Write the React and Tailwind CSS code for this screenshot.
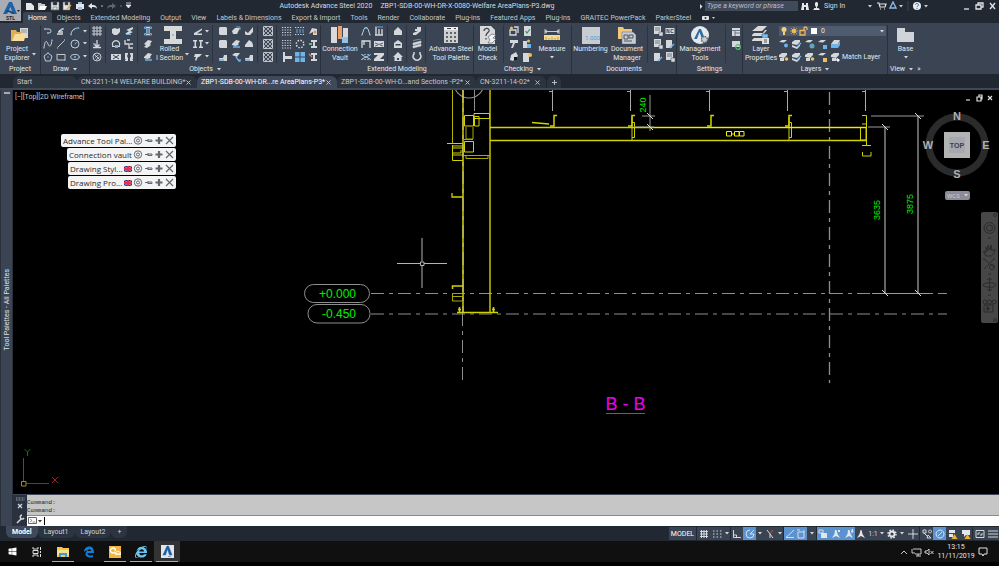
import { FaWindows, FaInternetExplorer } from "react-icons/fa";

/* ---------- small ribbon glyphs, drawn on a 10x10 grid ---------- */

const W = "#d4d8dc";
const B = "#6fb4e8";
const Y = "#f0c060";

const stroke = { fill: "none", stroke: W, strokeWidth: 0.9 };
const blue = { fill: "none", stroke: B, strokeWidth: 0.9 };

const glyphs = {
  polyline: <><path d="M1 3h5a2 2 0 0 1 0 4H4" {...stroke} /><path d="M1 3h2M4 7h2" {...blue} /></>,
  poly3d: <><path d="M1 8h6M2 6h5M3 6c0-3 4-1 4-4" {...stroke} strokeWidth="1.4" /><path d="M5 3h3" {...blue} /></>,
  arc: <><path d="M1 9C1 5 4 2 8 2" {...stroke} /><path d="M.5 8.5H2M4 3.5h1M8 2h1.2" {...blue} strokeWidth="1.3" /></>,
  spline: <><path d="M1 9C2 0 4 2 5 5s3 4 4-4" {...stroke} /><path d="M.5 9h1M8.5 1h1" {...blue} strokeWidth="1.3" /></>,
  line: <><path d="M1.5 8.5l7-7" {...stroke} /><path d="M1 9h1M8 1h1" {...blue} strokeWidth="1.3" /></>,
  circle: <><circle cx="5" cy="5" r="4" {...stroke} /><path d="M5 5l3-3M4.5 5h1" {...blue} /></>,
  polygon: <><path d="M5 1l4 3-1.5 5h-5L1 4z" {...stroke} /><path d="M4.5 5h1M4.5 1h1" {...blue} strokeWidth="1.3" /></>,
  rect: <><path d="M1 2.5h8V8H1z" {...stroke} /><path d="M.5 2.5H2M8 8h1.5" {...blue} strokeWidth="1.3" /></>,
  ellipse: <><ellipse cx="5" cy="5" rx="4.3" ry="2.5" {...stroke} /><path d="M4 5h2M8.5 5h1" {...blue} strokeWidth="1.3" /></>,
  grid: <path d="M2 0v10M5 0v10M8 0v10M0 2h10M0 5h10M0 8h10" {...stroke} />,
  axis: <><path d="M1 8.5h8M5 1v7M2.5 5.5L5 8l2.5-2.5" {...stroke} strokeWidth="1.3" /><path d="M1 5h3" {...stroke} /></>,
  noEntry: <><circle cx="5" cy="5" r="4" {...stroke} /><path d="M2 2l6 6M3 5.5L6.5 3M4 8l3.5-3" {...stroke} /></>,
  blobs: <path d="M1 3l3-1 2 1 3-1v4L6 9H3L1 7z" fill={W} />,
  wing: <><path d="M1 8l4-3-3-1 7-3v2L6 5l3 1-4 2z" fill={W} /><path d="M2 8.5h5" {...blue} /></>,
  omega: <><path d="M2 7a3.5 3.5 0 1 1 6 0M1 7.5h3M6 7.5h3" {...stroke} strokeWidth="1.2" /><path d="M4 6h3v3H4z" fill={B} /></>,
  stairs: <path d="M1 1v4h4v4h4M3 1h3M6 5h3" {...stroke} strokeWidth="1.3" />,
  plateH: <><path d="M0 2h10v6H0z" fill={W} /><path d="M2 3l3 2 3-2M2 7l3-2 3 2" fill="none" stroke="#3b4453" /></>,
  plates4: <path d="M1 1h3v1l-1 2 1 2v3H1V8l1-1H1V3zM9 1H6v1l1 2-1 2v3h3V8L8 7h1V3z" fill={W} />,
  ibeam: <><path d="M1.5 1h7v1.5h-2v5h2V9h-7V7.5h2v-5h-2z" {...blue} /><path d="M3 1.5h4M5 2v6M3 8.5h4" {...stroke} /></>,
  sheet: <path d="M1 5l4-4 4 1-2 3 1 1-4 3-3-1 2-2z" fill={W} />,
  sheetBlue: <><path d="M1 5l4-4 4 1-2 3 1 1-4 1-3-1z" fill={W} /><path d="M2 8h7" stroke={B} strokeWidth="1.5" /></>,
  angle: <path d="M1 9h8V7.5H4L9 4V2.5L1 7z" fill={W} />,
  twinI: <path d="M0 1h4v1.5H3v5h1V9H0V7.5h1.5v-5H0zM10 1H6v1.5h1v5H6V9h4V7.5H8.5v-5H10z" fill={W} />,
  bent: <path d="M2 2h7L6 5H5L3 9 2 8l1-3H1z" fill={W} />,
  plate: <path d="M2 1h6l1 1v7H2L1 8V2z" fill={W} />,
  plateCut: <><path d="M1 5l3-3h5L6 8H2z" fill={W} /><path d="M5 1h4v3" {...blue} /></>,
  plateFold: <path d="M1 5l3 2 5-6v5L6 9H2L1 8z" fill={W} />,
  dome: <path d="M1 8V6l4-5 3 2 1 3v2z" fill={W} />,
  slab: <><path d="M1 6h4l1-3h3v6H2z" fill={W} /><path d="M1 8h5" stroke={B} strokeWidth="1.6" /></>,
  slab2: <><path d="M1 3l3-2h5L6 5z" fill={W} /><path d="M5 5l3 4h1V7" stroke={B} fill="none" strokeWidth="1.3" /></>,
  checker: <path d="M0 2l2-2 8 8-2 2zM8 0l2 2-8 8-2-2zM4 0h2l4 4v2l-4 4H4L0 6V4zM.5.5h9v9h-9z" fill="none" stroke={W} strokeWidth=".7" />,
  dots: <path d="M0 1.5h10M0 4h10M0 6.5h10M0 9h10" fill="none" stroke={W} strokeWidth="1.2" strokeDasharray="1.3 1.3" />,
  dotsBlue: <><path d="M0 1.5h10M0 8.5h10" fill="none" stroke={W} strokeWidth="1.2" strokeDasharray="1.3 1.3" /><path d="M1 4h8M1 6h8" {...blue} strokeDasharray="2 1" /></>,
  ring: <circle cx="5" cy="5" r="3.7" fill="none" stroke={W} strokeWidth="1.5" strokeDasharray="1.5 1.4" />,
  tee: <path d="M1 0h2v4h7v3H3v3H1z" fill={W} />,
  tiles: <path d="M0 0h4.5v4.5H0zM5.5 0H10v4.5H5.5zM0 5.5h4.5V10H0zM5.5 5.5H10V10H5.5z" fill={B} />,
  weld: <><path d="M1 8l3-6 5 1v6H5V6z" fill={W} /><circle cx="7" cy="6" r="1.5" fill="#e09050" /></>,
  boltGreen: <><path d="M3 1h6v2H7v4h2v2H3V7h2V3H3z" fill={W} /><path d="M1 5h3" stroke="#50c878" strokeWidth="2" /></>,
  boltRed: <><path d="M3 1h6v2H7v4h2v2H3V7h2V3H3z" fill={W} /><path d="M1 2l3 3" stroke="#d08080" strokeWidth="1.2" /></>,
  frame: <><path d="M1 9l2-6 2-2 2 2 2 6" {...stroke} /><path d="M.5 9h1M3.5 2h3M8.5 9h1" {...blue} strokeWidth="1.3" /></>,
  portal: <path d="M1 9V2h8v7M3 2v4" {...stroke} strokeWidth="1.3" />,
  bracing: <><path d="M1 3l8 4M1 7l8-4" {...stroke} /><path d="M0 2.5h10M0 7.5h10" {...blue} strokeDasharray="2 1" /></>,
  columns: <><path d="M2 1v8M5 3v6M8 3v6M1 9h8" {...stroke} strokeWidth="1.4" /><path d="M1 1h8" {...blue} /></>,
  envelope: <><path d="M0 2h10v6H0z" fill={W} /><path d="M1 4l4 1.5L9 4M1 7l3-1M9 7L6 6" fill="none" stroke="#3b4453" strokeWidth=".8" /></>,
  zed: <path d="M0 1h10v2L6 7h4v2H0V7l4-4H0z" fill={W} />,
  house: <path d="M5 1l4 4v4H1V5z" fill={W} />,
  houseDoor: <path d="M5 0l5 5H8.5v4h-7V5H0zM4 6v2h2V6z" fill={W} fillRule="evenodd" />,
  houseBar: <path d="M5 1l4 3v5H1V4zM2.5 5v1.5h5V5z" fill={W} fillRule="evenodd" />,
  stair: <path d="M1 9h3l5-4V1H5v2H3v2h3L1 7z" fill={W} />,
  rail: <path d="M1 4l8-2v2L1 6zM1 7l8-2v2L1 9zM1 1.5L9 0" fill={W} stroke={W} strokeWidth=".5" />,
  cage: <path d="M2 0v2a3.800 3.800 0 1 0 6 0V0" fill="none" stroke={W} strokeWidth="1.5" />,
  clash: <><path d="M1 4h6v5H1zM5 1h4v6" {...stroke} strokeWidth="1.3" /><circle cx="2.5" cy="2" r="1.5" fill={Y} /></>,
  docCheck: <><path d="M2 0h7v10H2z" fill={W} /><path d="M3.5 5L5 7l3-4" fill="none" stroke="#2c9a50" strokeWidth="1.2" /></>,
  stampT: <path d="M1 1h8v3H6L4 9H2l2-5H1z" fill={W} />,
  stepBlue: <><path d="M1 2h4v7H1z" fill={W} /><path d="M5 5h4v4H5z" fill={B} /><circle cx="6.5" cy="2" r="1.5" fill={Y} /></>,
  dark: <><path d="M2 3l5-3 2 4-5 5-3-1z" fill={W} /><path d="M5 5h3v3H5z" fill="#11161d" /></>,
  docWarn: <><path d="M1 1h6v9H1z" fill={W} /><circle cx="8" cy="3" r="2" fill={Y} /></>,
  docs: <><path d="M1 0h7v8H1z" fill={W} /><path d="M2 2h5M2 4h5" stroke="#55606f" strokeWidth=".8" /><path d="M6 6h4v4H6z" fill={W} stroke="#3b4453" strokeWidth=".5" /></>,
  nc: <><path d="M.5 2h9v6h-9z" fill={W} /><path d="M2 7V3l2 4V3M8.500 3.500H6v3h2.500" fill="none" stroke="#3b4453" strokeWidth=".8" /></>,
  docPen: <><path d="M1 1h6v8H1z" fill={W} /><path d="M5 9l4-4" stroke={B} strokeWidth="1.5" /></>,
  table: <><path d="M1 1h8v8H1z" fill={W} /><path d="M1 3.5h8M4 3.5V9M4 6h5" stroke="#55606f" strokeWidth=".8" /></>,
  dbSync: <><path d="M1 1h8v6H1z" fill={W} /><circle cx="7" cy="7" r="2.3" fill="none" stroke="#58c070" strokeWidth="1.2" /></>,
  layerOff: <><path d="M0 3l3-2h5L5 3.5z" fill={W} /><circle cx="7" cy="6.5" r="2" fill={B} /></>,
  layerStack: <><path d="M0 3l3-2h5v2L5 6 0 5zM0 6l5 2 3-3v2L5 10 0 8z" fill={W} /><path d="M5 8l4-4" stroke={B} strokeWidth="1.2" /></>,
  layerFreeze: <><path d="M0 3l3-2h5L5 3.5z" fill={W} /><circle cx="7" cy="7" r="2.5" fill="#5fa9b8" /></>,
  layerLock: <><path d="M0 3l3-2h5L5 3.5z" fill={W} /><path d="M5 6h4v4H5z" fill={B} /></>,
  layerIso: <><path d="M0 5l3-4h6L7 5z" fill={W} /><path d="M0 5h7l2-3v4L7 9H0z" fill={B} /></>,
  layerOn: <><path d="M0 3l3-2h5v2L5 6 0 5zM1 6h4v3H1z" fill={W} /><circle cx="7.5" cy="7" r="1.8" fill={Y} /></>,
  layerUnlock: <><path d="M0 3l3-2h5L5 3.5z" fill={W} /><path d="M5 6h4v4H5z" fill={Y} /></>,
  layerMatch: <><path d="M0 3l3-2h5v2L5 6 0 5zM1 6h4v3H1z" fill={W} /><path d="M6 6l3 2-2 2-2-2z" fill="#fff" /></>,
};

function Glyph({ name }) {
  return (
    <svg viewBox="0 0 10 10" className="size-2.5" aria-hidden="true">
      {glyphs[name]}
    </svg>
  );
}

function Caret({ className = "" }) {
  return (
    <svg viewBox="0 0 4 3" className={`h-[3px] w-1 shrink-0 ${className}`} aria-hidden="true">
      <path d="M0 0h4L2 2.5z" fill="#d4d8dc" />
    </svg>
  );
}

function IconCol({ names, carets = false, width = "w-[13px]" }) {
  return (
    <div className="flex">
      <div className={`grid grid-rows-3 ${width}`}>
        {names.map((name, i) => (
          <button key={i} type="button" aria-label={name} className="flex items-center justify-center">
            <Glyph name={name} />
          </button>
        ))}
      </div>
      {carets && (
        <div className="grid w-1.5 grid-rows-3 place-items-center">
          {names.map((name, i) => (
            <Caret key={i} />
          ))}
        </div>
      )}
    </div>
  );
}

function Sep() {
  return <div className="mr-[3px] ml-0.5 w-px bg-[#2c3440]" />;
}

function BigButton({ icon, lines, width, caret }) {
  return (
    <button type="button" className={`flex flex-col items-center ${width}`}>
      <span className="flex h-5 items-center">{icon}</span>
      <span className="flex items-center gap-0.5 leading-[9px] whitespace-nowrap">
        <span>
          {lines.map((l) => (
            <span key={l} className="block">{l}</span>
          ))}
        </span>
        {caret === "side" && <Caret />}
      </span>
      {caret === "below" && <Caret className="mt-0.5" />}
    </button>
  );
}

function Panel({ title, caret, width, children }) {
  return (
    <section className={`flex shrink-0 flex-col border-r border-[#2a313d] ${width}`}>
      <div className="flex h-[38px]">{children}</div>
      <div className="flex h-[11px] items-end justify-center gap-1 leading-[10px]">
        {title}
        {caret && <Caret className="mb-[3px]" />}
      </div>
    </section>
  );
}

/* ---------- large ribbon icons ---------- */

const big = {
  project: (
    <svg viewBox="0 0 18 16" className="h-4 w-[18px]">
      <path d="M9 1h8v10H9z" fill="#d9d9d9" /><path d="M10 3h6M10 5h6" stroke="#8d939c" />
      <path d="M0 3h5l1 2h4v9H0z" fill="#e0ae5a" /><path d="M1 14l3-7h11l-2 7z" fill="#f6dd9a" />
    </svg>
  ),
  rolled: (
    <svg viewBox="0 0 18 18" className="size-[18px]">
      <path d="M0 0h18v5h-6v8h6v5H0v-5h6V5H0z" fill="#d9d9d9" /><path d="M8 9h2" stroke={B} strokeWidth="1.5" />
    </svg>
  ),
  vault: (
    <svg viewBox="0 0 18 18" className="size-[18px]">
      <path d="M0 1h6v16H0z" fill="#d9d9d9" /><path d="M7 0h4v13H7z" fill="#e9a06c" />
      <path d="M12 2h5v9h-5z" fill="#d9d9d9" /><path d="M11 11h6v6h-6z" fill="#8fc4ea" />
    </svg>
  ),
  palette: (
    <svg viewBox="0 0 14 18" className="h-[18px] w-3.5">
      <path d="M0 1h14v16H0z" fill="#d0d0d0" /><path d="M0 1h14v3H0z" fill="#eee" />
      <path d="M3 2.5h4M10 2.5h2" stroke="#444" />
      <path d="M2 6h2v2H2zM6 6h2v2H6zM10 6h2v2h-2zM2 10h2v2H2zM6 10h2v2H6zM10 10h2v2h-2zM2 14h2v2H2zM6 14h2v2H6zM10 14h2v2h-2z" fill="#5c6470" />
    </svg>
  ),
  model: (
    <svg viewBox="0 0 16 18" className="h-[18px] w-4">
      <path d="M0 0h11l4 4v14H0z" fill="#d9d9d9" /><path d="M4 5c0-4 6-3 5 0-1 2-3 2-3 5M6 12v1.5" fill="none" stroke="#3f4752" strokeWidth="1.3" />
      <path d="M8 11l4-3 4 1-3 3 3 1-4 4H8l2-3z" fill="#f2f2f2" stroke="#4c5563" strokeWidth=".6" />
    </svg>
  ),
  measure: (
    <svg viewBox="0 0 16 12" className="h-3 w-4">
      <path d="M1 0v5M15 0v5M1 2.5h14M3 1L1 2.5 3 4M13 1l2 1.5L13 4" fill="none" stroke="#d9d9d9" strokeWidth=".9" />
      <path d="M0 6h16v5H0z" fill="#f3dc8c" /><path d="M2 8v3M5 9v2M8 8v3M11 9v2M14 8v3" stroke="#9b8440" strokeWidth=".7" />
    </svg>
  ),
  numbering: (
    <svg viewBox="0 0 18 17" className="h-[17px] w-[18px]">
      <path d="M0 0h18v17H0z" fill="#c9cdd2" />
      <text x="3" y="13" fontSize="6" fill="#3f9fe0">1.000</text>
    </svg>
  ),
  manager: (
    <svg viewBox="0 0 18 18" className="size-[18px]">
      <path d="M0 1h5l1 2h8v10H0z" fill="#f0c877" /><path d="M4 6h11l3 3v9H4z" fill="#c9cdd2" stroke="#6b7380" strokeWidth=".6" />
      <path d="M6 9h4v4H6zM11 9h4v3h-4zM6 15h8" fill="none" stroke="#4c5563" />
    </svg>
  ),
  tools: (
    <svg viewBox="0 0 18 18" className="size-[18px]">
      <circle cx="9" cy="9" r="9" fill="#e6e9ec" /><path d="M3 13L8 3h2l4 10h-3L8.5 6 6 13z" fill="#2d6ca8" />
      <circle cx="13.5" cy="13.5" r="3" fill="#c9cdd2" stroke="#59616d" strokeWidth="1.4" strokeDasharray="1.5 .8" />
    </svg>
  ),
  layers: (
    <svg viewBox="0 0 18 18" className="size-[18px]">
      <path d="M0 5l6-5h9l-5 5zM0 9l2-2h9l2-3h2l-5 6H0zM0 14l2-2h9l2-3h2l-5 6H0z" fill="#d9d9d9" />
      <path d="M10 8h6v4h-6z" fill="#7ec0ee" stroke="#3b4453" strokeWidth=".5" /><path d="M10 12h7v6h-7z" fill="#e2e2e2" /><path d="M12 14h3M12 16h3" stroke="#555" />
    </svg>
  ),
  base: (
    <svg viewBox="0 0 17 14" className="h-3.5 w-[17px]">
      <path d="M0 0h8v4h9v10H0z" fill="#d0d3d7" />
    </svg>
  ),
};

const menuTabs = [
  "Home", "Objects", "Extended Modeling", "Output", "View", "Labels & Dimensions", "Export & Import", "Tools",
  "Render", "Collaborate", "Plug-ins", "Featured Apps", "Plug-ins", "GRAITEC PowerPack", "ParkerSteel",
];

function TitleBar() {
  return (
    <header className="flex h-3 items-center pl-1 text-[#d8dce1]">
      <svg viewBox="0 0 110 10" className="h-2.5 w-[110px] shrink-0" aria-hidden="true">
        <path d="M1 2h5l3 3v4H1z" fill="#e4e6e8" />
        <path d="M13 2h3l1 1h3v6h-7z" fill="#c9cdd1" /><path d="M15 5h7l-2 4h-6z" fill="#fff" />
        <path d="M26 1h8v8h-8zM28 1v3h4V1M28 6h4v3h-4z" fill="#e4e6e8" stroke="#5c6470" strokeWidth=".6" />
        <path d="M38 1h7v8h-7zM40 1v3h3V1" fill="#e4e6e8" stroke="#5c6470" strokeWidth=".6" /><path d="M42 8l4-4" stroke="#e8a13c" strokeWidth="1.5" />
        <path d="M51 3h8v5h-8z" fill="#e4e6e8" /><path d="M53 1h4v2h-4zM53 6h4v3h-4z" fill="#8cc4ee" />
        <path d="M63 5l4-3v2c3-.5 5 1 5 4-1-2-3-2-5-2v2z" fill="#e4e6e8" /><path d="M76 5h2" stroke="#bbb" />
        <path d="M91 5l-4-3v2c-3-.5-5 1-5 4 1-2 3-2 5-2v2z" fill="#5e6672" /><path d="M95 5h2" stroke="#777" />
        <path d="M101 2h5M101 4h5l-2.500 3z" fill="#e4e6e8" stroke="#e4e6e8" strokeWidth=".8" />
      </svg>
      <div className="flex flex-1 justify-center gap-2 whitespace-nowrap">
        <span>Autodesk Advance Steel 2020</span>
        <span>ZBP1-SDB-00-WH-DR-X-0080-Welfare AreaPlans-P3.dwg</span>
      </div>
      <div className="flex shrink-0 items-center">
        <svg viewBox="0 0 4 5" className="mr-0.5 h-[5px] w-1"><path d="M1 0l2.5 2.5L1 5z" fill="#d8dce1" /></svg>
        <input
          type="search"
          aria-label="Search help"
          placeholder="Type a keyword or phrase"
          className="h-2.5 w-[93px] bg-[#414a5b] px-0.5 text-[7px] leading-[10px] italic outline-none placeholder:text-[#b9bfc8]"
        />
        <svg viewBox="0 0 24 9" className="ml-0.5 h-[9px] w-6">
          <path d="M2 1h2v2h2V1h2v2l1 5H6V5H4v3H1l1-5zM13 8h7L18.500 6H17V5l1-1.500V1l-1-1h-1l-1 1v2.500L16 5v1h-1.500z" fill="#e4e6e8" />
        </svg>
        <button type="button" className="w-11 text-left">Sign In</button>
        <Caret />
        <svg viewBox="0 0 60 10" className="ml-1 h-2.5 w-[60px]">
          <path d="M1 2h2l1 4h5l1-3H4M4 8h1M8 8h1" fill="none" stroke="#e4e6e8" strokeWidth="1.2" />
          <path d="M17 1l-3 6h6z" fill="none" stroke="#8db7e8" strokeWidth="1.4" />
          <path d="M23 4h4l-2 2.5z" fill="#ccc" /><path d="M32 0v10" stroke="#3c4553" />
          <circle cx="41" cy="5" r="4" fill="#e9eef4" />
          <path d="M39.5 4c0-2 3-2 3 0 0 1-1.5 1-1.5 2.2M41 7v1" fill="none" stroke="#2d6ca8" />
          <path d="M48 4h4l-2 2.5z" fill="#ccc" />
        </svg>
        <div className="ml-6 flex">
          {["M2 8h5", "M1 4h5v4H1zM3 4V2h5v4H6", "M2 2l5 6M7 2L2 8"].map((d, i) => (
            <button key={d} type="button" aria-label={["Minimise", "Restore", "Close"][i]} className="w-[13px]">
              <svg viewBox="0 0 9 10" className="mx-auto h-2.5 w-[9px]"><path d={d} fill="none" stroke="#e4e6e8" strokeWidth="1.3" /></svg>
            </button>
          ))}
        </div>
      </div>
    </header>
  );
}

function Ribbon() {
  return (
    <div className="flex bg-[#3b4453] pt-0.5 text-[#e4e8ee]">
      <Panel title="Project" width="w-[41px]">
        <BigButton width="w-full" icon={big.project} lines={["Project", "Explorer"]} caret="side" />
      </Panel>
      <Panel title="Draw" caret width="w-[49px]">
        <IconCol names={["polyline", "spline", "polygon"]} />
        <IconCol names={["poly3d", "line", "rect"]} />
        <IconCol names={["arc", "circle", "ellipse"]} width="w-[15px]" carets />
      </Panel>
      <Panel title="Objects" caret width="w-[231px]">
        <IconCol names={["grid", "axis", "noEntry"]} />
        <Sep />
        <IconCol names={["blobs", "omega", "plateH"]} />
        <IconCol names={["wing", "stairs", "plates4"]} />
        <Sep />
        <IconCol names={["ibeam", "sheet", "sheetBlue"]} />
        <BigButton width="w-[37px]" icon={big.rolled} lines={["Rolled", "I Section"]} caret="side" />
        <IconCol names={["angle", "twinI", "bent"]} carets />
        <Sep />
        <IconCol names={["plate", "plate", "slab"]} />
        <IconCol names={["plateCut", "sheetBlue", "slab2"]} />
        <IconCol names={["plateFold", "dome", "slab"]} />
        <Sep />
        <IconCol names={["checker", "checker", "checker"]} />
        <Sep />
        <IconCol names={["dots", "dots", "tee"]} />
        <IconCol names={["dotsBlue", "ring", "tiles"]} />
        <IconCol names={["weld", "boltGreen", "boltRed"]} />
      </Panel>
      <Panel title="Extended Modeling" width="w-[153px]">
        <BigButton width="w-[38px]" icon={big.vault} lines={["Connection", "Vault"]} />
        <IconCol names={["frame", "portal", "bracing"]} />
        <IconCol names={["columns", "envelope", "zed"]} />
        <Sep />
        <IconCol names={["house", "houseBar", "houseDoor"]} />
        <Sep />
        <IconCol names={["stair", "rail", "cage"]} />
        <Sep />
        <BigButton width="w-[44px]" icon={big.palette} lines={["Advance Steel", "Tool Palette"]} />
      </Panel>
      <Panel title="Checking" caret width="w-[98px]">
        <BigButton width="w-[27px]" icon={big.model} lines={["Model", "Check"]} />
        <Sep />
        <IconCol names={["clash", "stampT", "dark"]} />
        <IconCol names={["docCheck", "stepBlue", "docWarn"]} />
        <BigButton width="w-[38px]" icon={big.measure} lines={["Measure"]} caret="below" />
      </Panel>
      <Panel title="Documents" width="w-[105px]">
        <BigButton width="w-[37px]" icon={big.numbering} lines={["Numbering"]} />
        <BigButton width="w-[36px]" icon={big.manager} lines={["Document", "Manager"]} />
        <Sep />
        <IconCol names={["docs", "docs", "docPen"]} />
        <IconCol names={["nc", "docPen", "docs"]} width="w-3" />
      </Panel>
      <Panel title="Settings" width="w-[66px]">
        <BigButton width="w-[46px]" icon={big.tools} lines={["Management", "Tools"]} />
        <Sep />
        <div className="grid h-[26px] w-[13px] grid-rows-2">
          {["table", "dbSync"].map((n) => (
            <button key={n} type="button" aria-label={n} className="flex items-center justify-center"><Glyph name={n} /></button>
          ))}
        </div>
      </Panel>
      <Panel title="Layers" caret width="w-[145px]">
        <BigButton width="w-[36px]" icon={big.layers} lines={["Layer", "Properties"]} />
        <div className="grid flex-1 grid-rows-3 pr-px">
          <div className="flex h-2.5 items-center self-center bg-[#4f5c70] pr-0.5">
            <svg viewBox="0 0 38 10" className="h-2.5 w-[38px] shrink-0" aria-hidden="true">
              <circle cx="5" cy="3.5" r="2.5" fill="#f5cf7a" /><path d="M4 6h2v3H4z" fill="#f5cf7a" />
              <circle cx="15" cy="5" r="2.3" fill="#f5b94a" /><path d="M15 1v8M11 5h8M12 2l6 6M18 2l-6 6" stroke="#f5b94a" strokeWidth=".6" />
              <path d="M21 4.5h5V9h-5zM25 4V2.5a1.5 1.5 0 0 1 3 0V4" fill="none" stroke="#f0b45c" strokeWidth="1.3" />
              <path d="M32 2h6v6h-6z" fill="#fff" />
            </svg>
            <select aria-label="Current layer" className="ml-1 h-2.5 flex-1 appearance-none bg-transparent text-[7px] leading-[10px] outline-none">
              <option>0</option>
            </select>
            <Caret />
          </div>
          <div className="flex items-center gap-[3px]">
            {["layerOff", "layerStack", "layerFreeze", "layerLock", "layerIso"].map((n) => (
              <button key={n} type="button" aria-label={n}><Glyph name={n} /></button>
            ))}
          </div>
          <div className="flex items-center gap-[3px]">
            {["layerOn", "layerStack", "layerOn", "layerUnlock"].map((n, i) => (
              <button key={i} type="button" aria-label={n}><Glyph name={n} /></button>
            ))}
            <button type="button" className="flex items-center gap-px whitespace-nowrap">
              <Glyph name="layerMatch" /> Match Layer
            </button>
          </div>
        </div>
      </Panel>
      <section className="w-[35px] shrink-0">
        <div className="flex h-[38px]">
          <BigButton width="w-full" icon={big.base} lines={["Base"]} caret="below" />
        </div>
        <div className="flex h-[11px] items-end gap-1 pl-0.5 leading-[10px]">
          View <Caret className="mb-[3px]" /> <span>»</span>
        </div>
      </section>
    </div>
  );
}

const fileTabs = [
  { name: "Start", width: "w-[64px]" },
  { name: "CN-3211-14 WELFARE BUILDING*", width: "w-[120px]", close: true },
  { name: "ZBP1-SDB-00-WH-DR...re AreaPlans-P3*", width: "w-[140px]", close: true, active: true },
  { name: "ZBP1-SDB-00-WH-D...and Sections -P2*", width: "w-[139px]", close: true },
  { name: "CN-3211-14-02*", width: "w-[70px]", close: true },
];

function FileTabs() {
  return (
    <nav className="flex h-4 items-end border-b-2 border-[#3f495a] pt-0.5 pl-[13px]">
      {fileTabs.map((t) => (
        <div
          key={t.name}
          className={`flex h-3 items-center justify-between rounded-t-md pr-1.5 pl-1 ${t.width} ${t.active ? "bg-[#3f495a] text-white" : "bg-[#2c3440] text-[#c3c8cf]"}`}
        >
          <button type="button" className="whitespace-nowrap">{t.name}</button>
          {t.close && (
            <button type="button" aria-label={`Close ${t.name}`}>
              <svg viewBox="0 0 5 5" className="size-[5px]"><path d="M.5.5l4 4M4.5.5l-4 4" stroke="#c3c8cf" strokeWidth=".9" /></svg>
            </button>
          )}
        </div>
      ))}
      <button type="button" aria-label="New tab" className="ml-px flex h-3 w-3.5 items-center justify-center rounded-t-md bg-[#2c3440]">
        <svg viewBox="0 0 5 5" className="size-[5px]"><path d="M2.5 0v5M0 2.5h5" stroke="#c3c8cf" strokeWidth=".9" /></svg>
      </button>
    </nav>
  );
}

/* ---------- section B-B, in window coordinates ---------- */

const purlins = [553, 631, 710, 788];
const dash = "13 5 4 5";

function Drawing() {
  return (
    <svg viewBox="13 90 986 404" className="block h-auto w-full" fontFamily="'Liberation Sans', Arial, sans-serif">
      {/* grid and level lines */}
      <g fill="none" stroke="#8e8e8e">
        <path d="M829.5 92v291" strokeDasharray={dash} strokeWidth="1.3" />
        <path d="M462.5 313v70" strokeDasharray={dash} />
        <path d="M371 293.5h576M371 314h576" strokeDasharray={dash} strokeWidth="1.2" />
        <circle cx="469" cy="83" r="15" strokeWidth="1.2" />
        <path d="M474.5 90v21" />
        <rect x="304.5" y="284.5" width="65" height="18" rx="9" />
        <rect x="308" y="304.5" width="62" height="18.5" rx="9" />
      </g>
      <g fill="none" stroke="#a8a8a8">
        {[...purlins, 866].map((x) => (
          <path key={x} d={`M${x - 0.5} 111V90M${x - 4} 91.5h3`} />
        ))}
      </g>

      {/* column */}
      <g fill="none" stroke="#d2d200">
        <path d="M452.5 90v54" stroke="#b4b400" />
        <path d="M490 90v223" strokeWidth="1.4" />
        <path d="M463 90v223" strokeWidth="1.5" />
        <path d="M474 113.500h15.500v5H474zM464.500 115.500h9v10.500h-9zM474.500 116.500h4.500v9.500h-4.500zM464.500 141.500h9v10.500h-9z" />
        <path d="M466 127v12h7v-12M464 139.5h9M464 155.5h26M466 156v2.5h22V156" stroke="#a8a800" />
        <path d="M447 143.5h16M452.5 146H463M452.5 148H463M452.5 155H463M452.5 145v15.5H463M461 150v3h-8" />
        <path d="M452 193v4h11" strokeWidth="1.3" />
        <path d="M452.5 289v-3H463" strokeWidth="1.5" />
        <path d="M452.5 294v7H463M452.5 296.5H463" stroke="#a8a800" />
        <path d="M457 312.5h41M459.5 307v5M493.5 307v5M458 309.5h3M492 309.5h3" strokeWidth="1.6" />
      </g>
      <path d="M463 90v223" stroke="#c9c9b0" strokeDasharray={dash} strokeWidth=".8" />

      {/* beam, purlins and end plate */}
      <g fill="none" stroke="#d2d200">
        <path d="M490 127.5h376M490 140.5h376" strokeWidth="1.4" />
        <path d="M532 122.5l17 1.5" strokeWidth="1.5" />
        {purlins.map((x) => (
          <path key={x} d={`M${x + 4} 115.5h-3v10.5h-4`} strokeWidth="1.5" />
        ))}
        {[631, 788].map((x) => (
          <path key={x} d={`M${x + 1} 117v23M${x + 1} 122.5h2.5v15h-2.5`} />
        ))}
        <path d="M726.5 131.5h5v4.5h-5zM734.5 131.5h4.5v4.5h-4.5zM739.5 131.5h4.5v4.5h-4.5zM731 134h3" stroke="#f0f000" />
        <path d="M862 115.5h4.5V145M860.5 127.5h5.5V140h-5.5zM862 145.5h9M862.5 152v4h8.5v-4M862 124h4" />
      </g>
      <path d="M634 127.5h232" stroke="#e0e0a0" strokeWidth=".8" />

      {/* dimensions */}
      <g fill="none" stroke="#9a9a9a">
        <path d="M871 116h53M868 127h22M872 293.5h58M642 116h13M634 127h20M650 95v36" />
        <path d="M885 127v166M918 116v177" strokeWidth="1.3" />
        <path d="M882 124l6 6M915 113l6 6M882 290l6 6M915 290l6 6M647 113l6 6M647 124l6 6" stroke="#e0e0e0" />
      </g>
      <g fill="#00f000" fontSize="12" textAnchor="end">
        <text x="356" y="298">+0.000</text>
        <text x="356" y="318">-0.450</text>
      </g>
      <g fill="#00f000" fontSize="9" textAnchor="middle">
        <text transform="translate(646 105) rotate(-90)">240</text>
        <text transform="translate(880 210) rotate(-90)">3635</text>
        <text transform="translate(913 204) rotate(-90)">3875</text>
      </g>
      <text x="625.5" y="410" fontSize="18" fill="#f000f0" textAnchor="middle">B - B</text>
      <path d="M606 413.5h39" stroke="#f000f0" />

      {/* crosshair and UCS icon */}
      <path d="M397 263.5h23M424 263.5h23M422 238v23.5M422 265.5V288M420.5 262h3.5v3.5h-3.5z" fill="none" stroke="#b4b4b4" />
      <g fill="none">
        <path d="M23.5 481v-23M24.5 449l3 3 3-3M27.5 452v4" stroke="#0b7a0b" />
        <path d="M26 483.5h23M52 477l6 6M58 477l-6 6" stroke="#a52020" />
        <path d="M21.5 481.5H26v4.5h-4.5z" stroke="#b08a10" />
      </g>
    </svg>
  );
}

const palettes = [
  { name: "Advance Tool Pal...", width: "w-[115px]" },
  { name: "Connection vault", width: "w-[109px]" },
  { name: "Drawing Styl...", width: "w-[108px]", flag: true },
  { name: "Drawing Pro...", width: "w-[108px]", flag: true },
];

function Palettes() {
  return (
    <div className="absolute top-11 left-12 flex flex-col items-end gap-px font-['Open_Sans',sans-serif]">
      {palettes.map((p) => (
        <div key={p.name} className={`flex h-[13px] items-center rounded-xs bg-[#f4f4f4] pr-px pl-0.5 text-[8px] text-[#2a2a2a] ${p.width}`}>
          <span className="flex-1 whitespace-nowrap">{p.name}</span>
          {p.flag && (
            <svg viewBox="0 0 8 6" className="mr-px h-1.5 w-2 shrink-0">
              <path d="M0 0h8v6H0z" fill="#2b2f86" /><path d="M0 0l8 6M8 0L0 6" stroke="#e8a0b0" /><path d="M4 0v6M0 3h8" stroke="#e8304c" strokeWidth="1.8" />
            </svg>
          )}
          <svg viewBox="0 0 42 9" className="h-[9px] w-[42px] shrink-0" fill="none" stroke="#606870">
            <circle cx="5" cy="4.5" r="3.7" /><circle cx="5" cy="4.5" r="1.5" />
            <path d="M12 4.5h3M15 3v3M15 4h4v1.5h-4" />
            <path d="M26 1v7M22.5 4.5h7" strokeWidth="2.2" />
            <path d="M33 1l7 7M40 1l-7 7" strokeWidth="1.2" />
          </svg>
        </div>
      ))}
    </div>
  );
}

function ViewTools() {
  return (
    <>
      <div className="absolute top-1 right-0.5 flex">
        {["M2 6h4", "M2 3h4v4H2zM4 3V1h3v4H6", "M2 2l4 4M6 2L2 6"].map((d, i) => (
          <button key={d} type="button" aria-label={["Minimise view", "Restore view", "Close view"][i]} className="w-[11px]">
            <svg viewBox="0 0 8 8" className="size-2"><path d={d} fill="none" stroke="#e0e0e0" strokeWidth="1.2" /></svg>
          </button>
        ))}
      </div>
      <svg viewBox="0 0 74 74" className="absolute top-[18px] right-[5px] size-[74px]" fontFamily="'Liberation Sans', Arial, sans-serif" textAnchor="middle">
        <circle cx="37" cy="37" r="28" fill="none" stroke="#2b2b2b" strokeWidth="7" />
        <path d="M24 24h26v26H24z" fill="#b3b3b3" /><path d="M29 29h16v16H29z" fill="#a5a8ae" />
        <text x="37" y="39.5" fontSize="7" fontWeight="bold" fill="#3c4048">TOP</text>
        <g fontSize="11" fontWeight="bold" fill="#b0b0b0">
          <text x="37" y="12">N</text><text x="37" y="70">S</text><text x="8" y="41">W</text><text x="66" y="41">E</text>
        </g>
      </svg>
      <button type="button" className="absolute top-[101px] right-[29px] flex h-[9px] w-[25px] items-center justify-between rounded-xs bg-[#8c8c96] px-0.5 text-[6px] leading-[9px] text-[#c9c9d0]">
        WCS <Caret />
      </button>
      <svg viewBox="0 0 17 111" className="absolute top-[122px] right-px h-[111px] w-[17px]" fill="none" stroke="#2b2b2b">
        <rect width="17" height="111" rx="2" fill="#474747" stroke="none" />
        <circle cx="14" cy="3" r="1.5" /><circle cx="8.5" cy="16" r="5.5" /><circle cx="8.5" cy="16" r="3" />
        <path d="M7 26h3" /><path d="M5 44c-2-3-3-5-2-5l2 2v-6l2 4v-6l2 5 1-5 1 6 3-2c0 3-2 7-4 7z" />
        <path d="M3 47l11 9M13 47L3 57M2 47h2M12 47h2" /><circle cx="11" cy="55" r="2.5" /><path d="M7 62h3" />
        <path d="M8.5 66v13M6 68l2.5-2L11 68M6 77l2.5 2 2.5-2M2 73c0-3 13-3 13 0s-13 3-13 0" /><path d="M7 83h3" />
        <circle cx="4" cy="90" r="2" /><circle cx="8.5" cy="90" r="2" /><circle cx="13" cy="90" r="2" /><path d="M3 93h9v7H3z" /><path d="M6 94.5v4l3-2z" fill="#2b2b2b" />
        <circle cx="14" cy="108" r="1.5" />
      </svg>
    </>
  );
}

function CommandLine() {
  return (
    <div className="flex border-t border-[#3f495a]">
      <div className="flex w-3.5 flex-col items-center bg-[#2b323f]">
        <svg viewBox="0 0 10 30" className="h-[30px] w-2.5" fill="none" stroke="#d5d9de">
          <path d="M1 3h9M1 5h9" stroke="#8d95a1" strokeDasharray="1 .5" /><path d="M3 9l4 4M7 9l-4 4" strokeWidth="1.2" />
          <path d="M2 28l4-4M7 20a2 2 0 1 0 2 3" strokeWidth="1.5" />
        </svg>
      </div>
      <div className="flex-1">
        <div className="bg-[#c6c6c6] pt-1 font-['Liberation_Mono',monospace] text-[6px] leading-[8px] text-[#222]">
          <p>Command:</p>
          <p>Command:</p>
        </div>
        <div className="flex h-[11px] items-center gap-0.5 border-t border-[#8a8a8a] bg-white pl-px">
          <svg viewBox="0 0 14 8" className="h-2 w-3.5" fill="none" stroke="#666">
            <path d="M.5.5h8v6h-8z" /><path d="M2 2l2 1.5L2 5M4.5 5h3" strokeWidth=".7" /><path d="M10 3h4l-2 2.5z" fill="#333" stroke="none" />
          </svg>
          <input aria-label="Command line" className="h-2 flex-1 border-l border-black bg-white text-[6px] text-black outline-none" />
        </div>
      </div>
    </div>
  );
}

/* status bar toggles; "gap" starts a new group */
const toggles = [
  { id: "Grid", w: "w-[14px]", gap: true, d: "M2.5 1v8M5 1v8M7.5 1v8M1 2.5h8M1 5h8M1 7.5h8" },
  { id: "Snap", w: "w-[13px]", d: "M1 2h1.5M4.5 2H6M8 2h1.5M1 5h1.5M4.5 5H6M8 5h1.5M1 8h1.5M4.5 8H6M8 8h1.5" },
  { caret: true, w: "w-[7px]" },
  { id: "Ortho", w: "w-[13px]", gap: true, d: "M1.5 1v7.5H9M1.5 6h3v2.5" },
  { id: "Polar", w: "w-[13px]", on: true, d: "M5 1a4 4 0 1 0 4 4M5 5h4M5 5l4-4" },
  { caret: true, w: "w-[7px]" },
  { id: "Isodraft", w: "w-[13px]", d: "M2 1l6 8M5 5v4", accent: "M5 5l3-4" },
  { caret: true, w: "w-[7px]" },
  { id: "Tracking", w: "w-[12px]", gap: true, on: true, d: "M9 1L1 8.5h8" },
  { id: "Osnap", w: "w-[12px]", on: true, d: "M2 3h6v6H2zM8 1v2M1 1h3" },
  { caret: true, w: "w-[9px]" },
  { id: "Cycling", w: "w-[13px]", gap: true, on: true, d: "M1 1h4v3H1z", fill: "M3 4h6v5H3z" },
  { id: "Annotation", w: "w-[13px]", on: true, fill: "M4 1h1.500l1 4L9 9 5 7 1 9l2.500-4zM7 1h2v2H7z" },
  { id: "Auto scale", w: "w-[13px]", on: true, fill: "M4 1h1.500l1 4L9 9 5 7 1 9l2.500-4zM8 0l-1 3h1L7 5l3-3H9V0z" },
  { id: "Scale", w: "w-[12px]", fill: "M4.500 1h1l1 4L9 9 5 7 1 9l2.500-4z" },
  { text: "1:1", w: "w-[18px]" },
  { id: "Workspace", w: "w-[13px]", gear: true },
  { caret: true, w: "w-[8px]" },
  { id: "Monitor", w: "w-[13px]", d: "M5 0v10M0 5h10" },
  { id: "Isolate", w: "w-[14px]", gap: true, d: "M1 1h3v3H1zM8 1a1.500 1.500 0 1 0 .1 0M6 6l3 3H5zM2 4l3 3" },
  { id: "Graphics", w: "w-[13px]", on: true, d: "M5 1a4 4 0 1 0 .1 0M3 7l4-4" },
  { id: "Trusted", w: "w-[13px]", fill: "M1 1h6v3H1zM1 5h4v3H1z", warn: true },
  { id: "Units", w: "w-[13px]", fill: "M1 1h8v5H5L3 8V5H1z", warn: true },
  { id: "Clean screen", w: "w-[14px]", gap: true, d: "M1 1.5h8v7H1zM3 6V4h2M7 4v2H5" },
  { id: "Customise", w: "w-[13px]", d: "M0 2h10M0 5h10M0 8h10" },
];

function StatusBar() {
  return (
    <div className="flex h-[15px] items-center justify-between text-[#cdd2d8]">
      <nav className="flex h-full items-start pl-1.5">
        <button type="button" className="h-3 rounded-b-md bg-[#3f495a] px-1.5 font-bold text-white">Model</button>
        <button type="button" className="h-3 rounded-b-md bg-[#2c3440] px-1.5">Layout1</button>
        <button type="button" className="h-3 rounded-b-md bg-[#2c3440] px-1.5">Layout2</button>
        <button type="button" className="h-3 rounded-b-md bg-[#2c3440] px-1.5">+</button>
      </nav>
      <div className="flex h-[13px] items-stretch">
        <button type="button" className="w-[27px] bg-[#3a4352] text-white">MODEL</button>
        {toggles.map((t, i) => (
          <button
            key={i}
            type="button"
            aria-label={t.id}
            className={`flex items-center justify-center ${t.w} ${t.gap ? "border-l border-[#212832]" : ""} ${t.on ? "bg-[#5b93d1]" : "bg-[#3a4352]"}`}
          >
            {t.caret && <Caret />}
            {t.text && <span className="flex items-center gap-0.5">{t.text}<Caret /></span>}
            {t.id && (
              <svg viewBox="0 0 10 10" className="size-2.5" fill="none" stroke="#e4e7ea">
                {t.d && <path d={t.d} strokeWidth=".9" />}
                {t.accent && <path d={t.accent} stroke="#d05050" />}
                {t.fill && <path d={t.fill} fill="#e4e7ea" stroke="none" />}
                {t.warn && <path d="M6.5 5l3 5h-6z" fill="#f0b030" stroke="none" />}
                {t.gear && <><circle cx="5" cy="5" r="2.5" strokeWidth="1.8" /><circle cx="5" cy="5" r="4" strokeWidth="1.4" strokeDasharray="1.6 1.54" /></>}
              </svg>
            )}
          </button>
        ))}
      </div>
    </div>
  );
}

const apps = [
  { id: "Start menu", icon: <FaWindows className="size-[9px] text-white" /> },
  { id: "Task view", icon: <svg viewBox="0 0 10 10" className="size-2.5" fill="none" stroke="#ddd"><path d="M1 0v2h5V0M1 10V8h5v2M1 3.5h5v3H1zM8.500 0v3M8.500 4v2M8.500 7v3" /></svg> },
  { id: "File Explorer", run: true, icon: <svg viewBox="0 0 12 11" className="h-[11px] w-3"><path d="M0 1h5l1 1h6v9H0z" fill="#f3c94f" /><path d="M0 4h12v5H0z" fill="#fbe08a" /><path d="M2 7h8v4H8V9H4v2H2z" fill="#3c9be0" /></svg> },
  { id: "Edge", icon: <svg viewBox="0 0 12 12" className="size-3"><path d="M1 6C1 2 4 .5 6.5.5c3 0 4.5 2.500 4.500 6.500H4.500c0 3 3.500 3 5.500 2v2C6 12.500 2 11 2.500 7.500 2.700 6 4 4.500 5 4 3.500 4 2 5 1 6zm3.700-1H8c0-2.500-3-2.500-3.300 0z" fill="#0c7fdc" /></svg> },
  { id: "Outlook", run: true, icon: <svg viewBox="0 0 12 12" className="size-3"><path d="M0 0h12v12H0z" fill="#f4b63c" /><circle cx="4" cy="4.5" r="2.5" fill="none" stroke="#fff" strokeWidth="1.3" /><path d="M6 5h6v4H6z" fill="#fff3cf" /><path d="M6 5l3 2 3-2" fill="none" stroke="#d08a20" strokeWidth=".6" /></svg> },
  { id: "Internet Explorer", run: true, icon: <FaInternetExplorer className="size-3 text-[#6cc7ee]" /> },
  { id: "Advance Steel", run: true, active: true, icon: <svg viewBox="0 0 13 13" className="size-[13px]"><path d="M0 0h13v13H0z" fill="#dfe6ee" /><path d="M2 10L6 1h1.500L11 10H8.500L6.500 4l-2 6zM7 11.500h3" fill="#1f5d9c" stroke="#1f5d9c" strokeWidth=".5" /></svg> },
];

function TaskBar() {
  return (
    <footer className="flex h-[21px] items-stretch bg-[#101010] text-[#e6e6e6]">
      {apps.map((a, i) => (
        <button key={a.id} type="button" aria-label={a.id} className={`relative flex items-center justify-center ${i === 0 ? "w-6" : "w-[26px]"} ${a.active ? "bg-[#333]" : ""}`}>
          {a.icon}
          {a.run && <span className="absolute inset-x-0.5 bottom-0 h-px bg-[#76b9ed]" />}
        </button>
      ))}
      <div className="ml-auto flex items-center gap-1.5 pr-[11px]">
        <svg viewBox="0 0 34 10" className="h-2.5 w-[34px]" fill="none" stroke="#e0e0e0">
          <path d="M1 7l3-3 3 3M13 2h8v5h-6M12 2v4h3M18 7v2M16 9h5M25 4h2l2-2v6l-2-2h-2zM30.5 4l3 3M33.5 4l-3 3" strokeWidth=".9" />
        </svg>
        <div className="w-8 text-center leading-[9px]">
          <div>13:15</div>
          <div className="flex justify-center whitespace-nowrap">11/11/2019</div>
        </div>
        <svg viewBox="0 0 10 10" className="size-2.5" fill="none" stroke="#e0e0e0"><path d="M1 1h8v6H6L5 9 4 7H1z" /></svg>
      </div>
    </footer>
  );
}

export default function App() {
  return (
    <div className="flex min-h-screen flex-col bg-black font-['Roboto','Noto_Sans',sans-serif] text-[7px] leading-[10px]">
      <div className="bg-[#212832]">
        <div className="flex">
          <button type="button" aria-label="Application menu" className="flex h-[21px] w-[21px] shrink-0 items-center justify-center bg-[#a9adb3]">
            <svg viewBox="0 0 20 20" className="size-5">
              <path d="M2 13L8 1h3l5 12h-4L9.5 6 6 13z" fill="#1c63a8" /><path d="M6 9c3 0 5 1 8 4h-3C9 11 7 11 5 11z" fill="#164a80" />
              <text x="5" y="19" fontSize="5" fontWeight="bold" fill="#222">STL</text><path d="M16 9h3l-1.5 2z" fill="#222" />
            </svg>
          </button>
          <div className="min-w-0 flex-1">
            <TitleBar />
            <nav className="flex h-[11px] items-center pl-0.5 text-[#c3c8cf]">
              {menuTabs.map((t, i) => (
                <button key={i} type="button" className={`h-[11px] px-[5px] whitespace-nowrap ${i === 0 ? "rounded-t-xs bg-[#3b4453] text-white" : ""}`}>
                  {t}
                </button>
              ))}
              <svg viewBox="0 0 14 6" className="ml-1.5 h-1.5 w-3.5"><rect y="1" width="7" height="4" rx="1" fill="#e4e6e8" /><circle cx="3.5" cy="3" r="1" fill="#333" /><path d="M10 2h3l-1.5 2z" fill="#ccc" /></svg>
            </nav>
          </div>
        </div>
        <Ribbon />
        <FileTabs />
      </div>

      <div className="flex">
        <aside className="flex w-[13px] shrink-0 flex-col items-center border-x border-[#2a313d] bg-[#3b4453] text-[#dfe2e6]">
          <div className="mt-0.5 h-0.5 w-1.5 bg-[#a4abb5]" />
          <div className="flex flex-1 items-center">
            <div className="rotate-180 whitespace-nowrap [writing-mode:vertical-rl]">Tool Palettes - All Palettes</div>
          </div>
        </aside>
        <div className="min-w-0 flex-1">
          <main className="relative">
            <Drawing />
            <div className="absolute top-0.5 left-0.5 text-[#c8c8c8]">[−][Top][2D Wireframe]</div>
            <Palettes />
            <ViewTools />
          </main>
          <CommandLine />
        </div>
      </div>

      <div className="bg-[#212832]">
        <StatusBar />
      </div>
      <TaskBar />
    </div>
  );
}
